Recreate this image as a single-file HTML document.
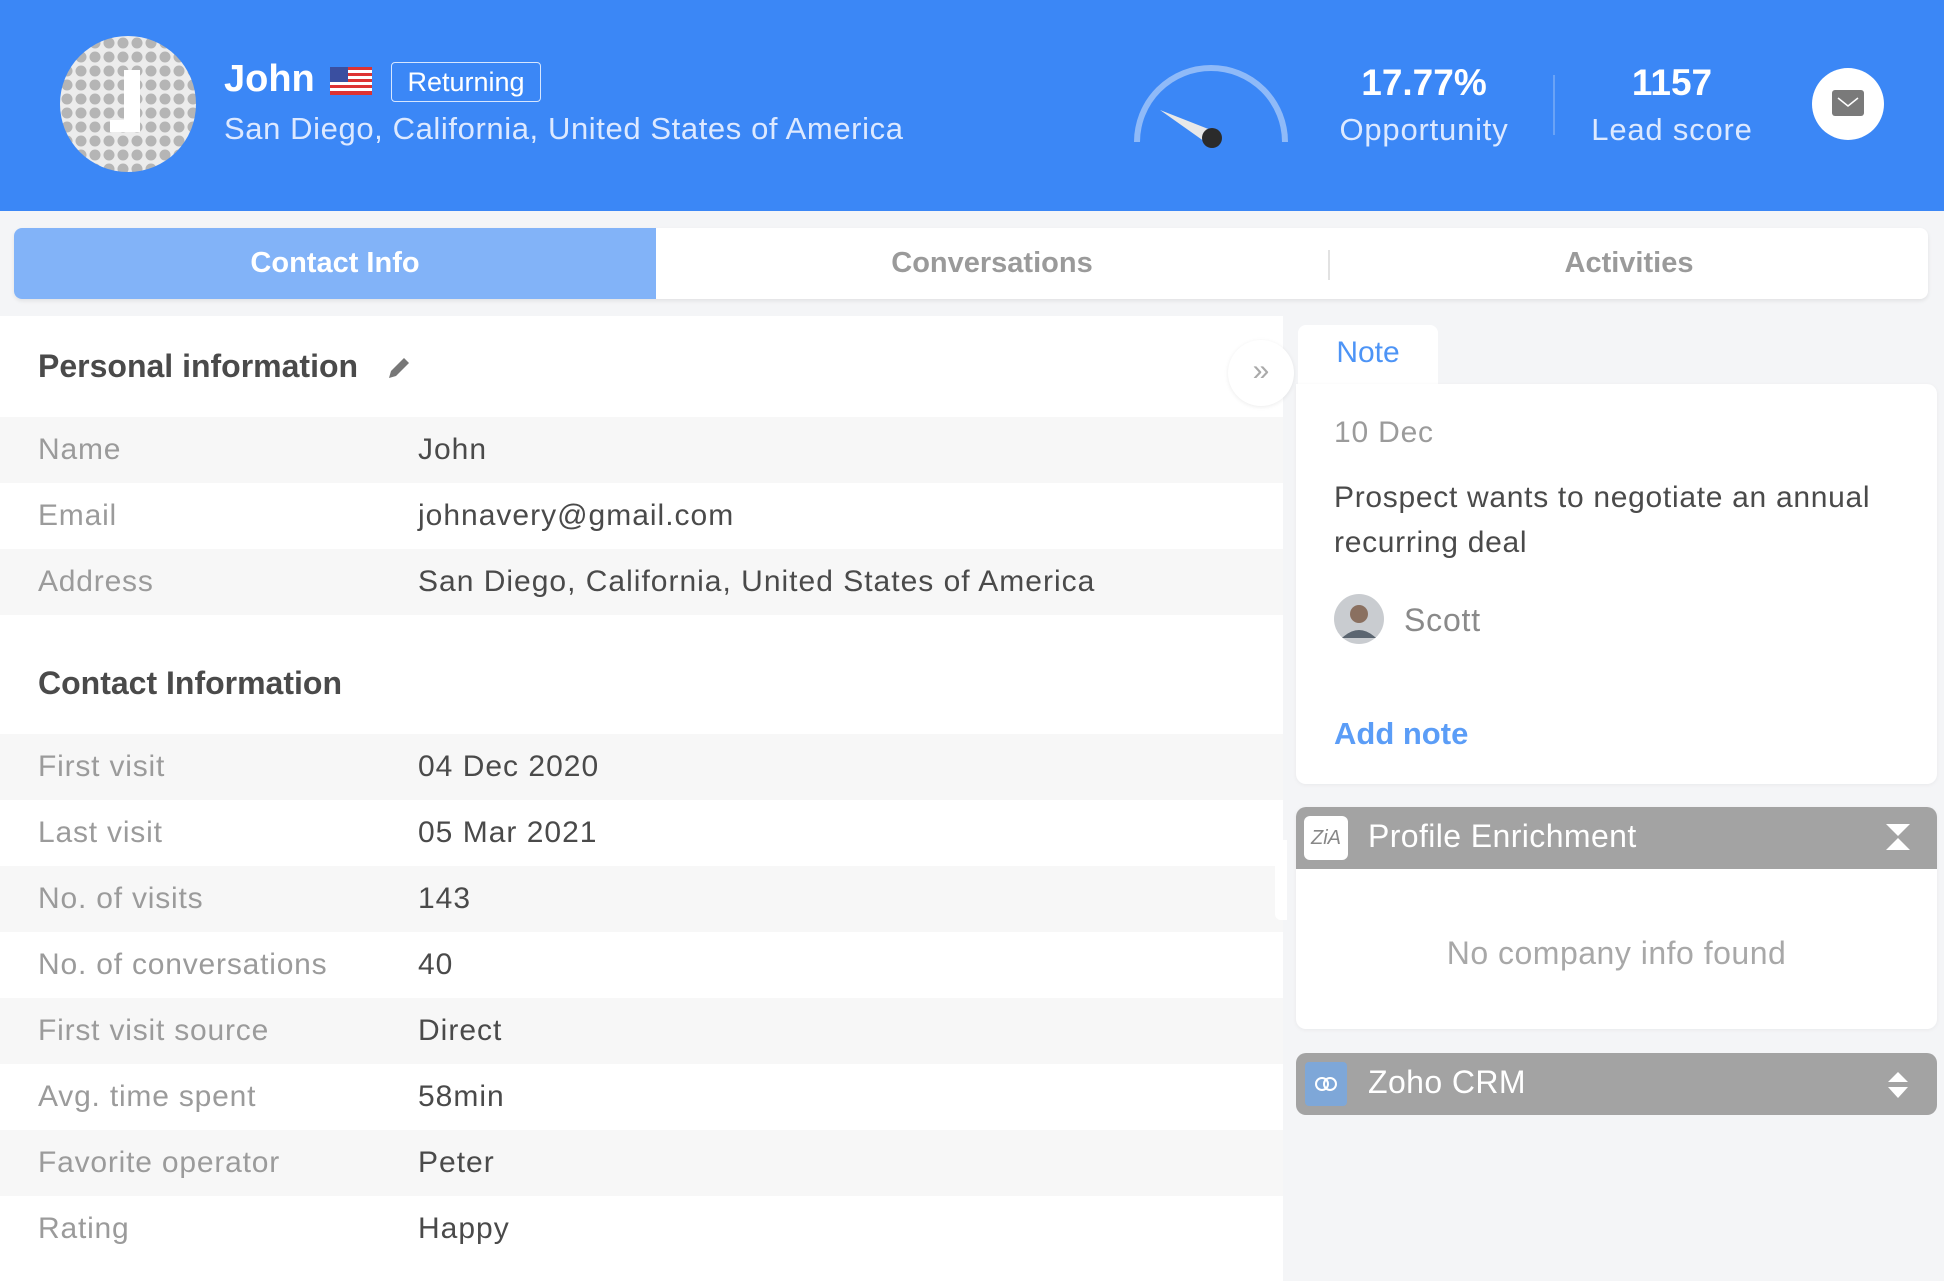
<!DOCTYPE html>
<html><head><meta charset="utf-8"><style>
*{margin:0;padding:0;box-sizing:border-box}
body{width:1944px;height:1281px;overflow:hidden;background:#f4f5f7;font-family:"Liberation Sans",sans-serif;position:relative}
.abs{position:absolute}
.hdr{left:0;top:0;width:1944px;height:211px;background:#3b87f6}
.w{color:#fff}
.row{position:absolute;left:0;width:1283px;height:66px}
.row .l{position:absolute;left:38px;top:0;line-height:66px;font-size:30px;letter-spacing:0.8px;color:#9b9b9b}
.row .v{position:absolute;left:418px;top:0;line-height:66px;font-size:30px;letter-spacing:1px;color:#4a4a4a}
.g{background:#f7f7f7}
</style></head><body>
<div class="abs hdr"></div>
<svg class="abs" style="left:60px;top:36px" width="136" height="136"><defs><pattern id="p" width="14" height="14" patternUnits="userSpaceOnUse"><rect width="14" height="14" fill="#ececec"/><circle cx="7" cy="7" r="5.5" fill="#b5b5b5"/></pattern></defs><circle cx="68" cy="68" r="68" fill="url(#p)"/><rect x="64" y="34" width="16" height="62" fill="#fff"/><rect x="50" y="84" width="30" height="12" fill="#fff"/></svg>
<div class="abs w" style="left:224px;top:58px;font-size:38px;font-weight:bold">John</div>
<svg class="abs" style="left:330px;top:67px" width="42" height="28"><rect width="42" height="28" fill="#fff"/><g fill="#d33"><rect y="0" width="42" height="3"/><rect y="6" width="42" height="3"/><rect y="12" width="42" height="3"/><rect y="18" width="42" height="3"/><rect y="24" width="42" height="4"/></g><rect width="18" height="15" fill="#3a4fa0"/></svg>
<div class="abs w" style="left:391px;top:62px;width:150px;height:40px;border:1.5px solid #d6e6ff;border-radius:4px;font-size:27px;text-align:center;line-height:38px">Returning</div>
<div class="abs" style="left:224px;top:111px;font-size:31px;letter-spacing:0.6px;color:#dde9ff">San Diego, California, United States of America</div>
<svg class="abs" style="left:1130px;top:60px" width="170" height="100"><path d="M7 82 A74 74 0 0 1 155 82" fill="none" stroke="#8fbaf8" stroke-width="6"/><path d="M30 50 L78 84 L86 72 Z" fill="#e8e8e8"/><circle cx="82" cy="78" r="10" fill="#2b2b2b"/></svg>
<div class="abs w" style="left:1324px;top:62px;width:200px;text-align:center;font-size:37px;font-weight:bold">17.77%</div>
<div class="abs" style="left:1304px;top:112px;width:240px;text-align:center;font-size:31px;letter-spacing:0.8px;color:#dde9ff">Opportunity</div>
<div class="abs" style="left:1553px;top:75px;width:2px;height:60px;background:#6aa3f6"></div>
<div class="abs w" style="left:1572px;top:62px;width:200px;text-align:center;font-size:37px;font-weight:bold">1157</div>
<div class="abs" style="left:1552px;top:112px;width:240px;text-align:center;font-size:31px;letter-spacing:0.8px;color:#dde9ff">Lead score</div>
<div class="abs" style="left:1812px;top:68px;width:72px;height:72px;border-radius:50%;background:#fff"></div>
<svg class="abs" style="left:1832px;top:90px" width="32" height="26"><rect width="32" height="26" rx="3" fill="#7a7a7a"/><path d="M6 8 L16 16 L26 8" fill="none" stroke="#fff" stroke-width="1.5"/></svg>
<div class="abs" style="left:14px;top:228px;width:1914px;height:71px;background:#fff;border-radius:8px;box-shadow:0 2px 4px rgba(0,0,0,.08)"></div>
<div class="abs w" style="left:14px;top:228px;width:642px;height:71px;background:#82b3f8;border-radius:8px 0 0 8px;font-size:29px;font-weight:bold;text-align:center;line-height:71px">Contact Info</div>
<div class="abs" style="left:656px;top:228px;width:672px;text-align:center;line-height:71px;font-size:29px;font-weight:bold;color:#9a9a9a">Conversations</div>
<div class="abs" style="left:1328px;top:250px;width:2px;height:30px;background:#e2e2e2"></div>
<div class="abs" style="left:1330px;top:228px;width:598px;text-align:center;line-height:71px;font-size:29px;font-weight:bold;color:#9a9a9a">Activities</div>
<div class="abs" style="left:0;top:316px;width:1283px;height:965px;background:#fff"></div>
<div class="abs" style="left:38px;top:348px;font-size:32px;font-weight:bold;color:#4a4a4a">Personal information</div>
<svg class="abs" style="left:385px;top:354px" width="28" height="28"><path d="M4 24 L6 17 L19 4 L24 9 L11 22 Z" fill="#777"/></svg>
<div class="row g" style="top:417px"><span class="l">Name</span><span class="v">John</span></div>
<div class="row" style="top:483px"><span class="l">Email</span><span class="v">johnavery@gmail.com</span></div>
<div class="row g" style="top:549px"><span class="l">Address</span><span class="v">San Diego, California, United States of America</span></div>
<div class="abs" style="left:38px;top:665px;font-size:32px;font-weight:bold;color:#4a4a4a">Contact Information</div>
<div class="row g" style="top:734px"><span class="l">First visit</span><span class="v">04 Dec 2020</span></div>
<div class="row" style="top:800px"><span class="l">Last visit</span><span class="v">05 Mar 2021</span></div>
<div class="row g" style="top:866px"><span class="l">No. of visits</span><span class="v">143</span></div>
<div class="row" style="top:932px"><span class="l">No. of conversations</span><span class="v">40</span></div>
<div class="row g" style="top:998px"><span class="l">First visit source</span><span class="v">Direct</span></div>
<div class="row" style="top:1064px"><span class="l">Avg. time spent</span><span class="v">58min</span></div>
<div class="row g" style="top:1130px"><span class="l">Favorite operator</span><span class="v">Peter</span></div>
<div class="row" style="top:1196px"><span class="l">Rating</span><span class="v">Happy</span></div>
<div class="abs" style="left:1228px;top:340px;width:66px;height:66px;border-radius:50%;background:#fff;box-shadow:0 1px 4px rgba(0,0,0,.08);color:#aaa;font-size:30px;text-align:center;line-height:62px">»</div>
<div class="abs" style="left:1275px;top:840px;width:12px;height:80px;background:#fff;border-radius:6px 0 0 6px"></div>
<div class="abs" style="left:1298px;top:325px;width:140px;height:65px;background:#fff;border-radius:8px 8px 0 0;color:#4d94f6;font-size:30px;text-align:center;line-height:56px">Note</div>
<div class="abs" style="left:1296px;top:384px;width:641px;height:400px;background:#fff;border-radius:0 10px 10px 10px;box-shadow:0 1px 4px rgba(0,0,0,.05)"></div>
<div class="abs" style="left:1334px;top:416px;font-size:30px;letter-spacing:0.8px;color:#9b9b9b">10 Dec</div>
<div class="abs" style="left:1334px;top:475px;font-size:30px;letter-spacing:0.7px;color:#4a4a4a;line-height:45px;width:590px">Prospect wants to negotiate an annual recurring deal</div>
<svg class="abs" style="left:1334px;top:594px" width="50" height="50"><circle cx="25" cy="25" r="25" fill="#c9ccd0"/><circle cx="25" cy="20" r="9" fill="#8a7060"/><path d="M8 44 Q25 28 42 44" fill="#5b6570"/></svg>
<div class="abs" style="left:1404px;top:602px;font-size:32px;letter-spacing:0.8px;color:#8a8a8a">Scott</div>
<div class="abs" style="left:1334px;top:716px;font-size:31px;font-weight:bold;color:#5b9df7">Add note</div>
<div class="abs" style="left:1296px;top:807px;width:641px;height:222px;background:#fff;border-radius:10px;overflow:hidden;box-shadow:0 1px 4px rgba(0,0,0,.05)"><div style="height:62px;background:#a3a3a3"></div></div>
<div class="abs" style="left:1304px;top:816px;width:44px;height:44px;background:#fff;border-radius:6px;color:#888;font-size:20px;text-align:center;line-height:44px;font-style:italic">ZiA</div>
<div class="abs w" style="left:1368px;top:818px;font-size:32px;letter-spacing:0.4px">Profile Enrichment</div>
<svg class="abs" style="left:1886px;top:824px" width="24" height="26"><path d="M0 0 H24 L12 12 Z M12 14 L24 26 H0 Z" fill="#fff"/></svg>
<div class="abs" style="left:1296px;top:935px;width:641px;text-align:center;font-size:32px;letter-spacing:0.5px;color:#a8a8a8">No company info found</div>
<div class="abs" style="left:1296px;top:1053px;width:641px;height:62px;background:#a3a3a3;border-radius:10px"></div>
<div class="abs" style="left:1305px;top:1062px;width:42px;height:44px;background:#7ea7d8;border-radius:4px"></div>
<svg class="abs" style="left:1312px;top:1072px" width="28" height="24"><circle cx="10" cy="12" r="6" fill="none" stroke="#fff" stroke-width="2"/><circle cx="18" cy="12" r="6" fill="none" stroke="#fff" stroke-width="2"/></svg>
<div class="abs w" style="left:1368px;top:1064px;font-size:32px;letter-spacing:0.4px">Zoho CRM</div>
<svg class="abs" style="left:1888px;top:1072px" width="20" height="26"><path d="M10 0 L20 10 H0 Z M0 15 H20 L10 26 Z" fill="#fff"/></svg>
</body></html>
